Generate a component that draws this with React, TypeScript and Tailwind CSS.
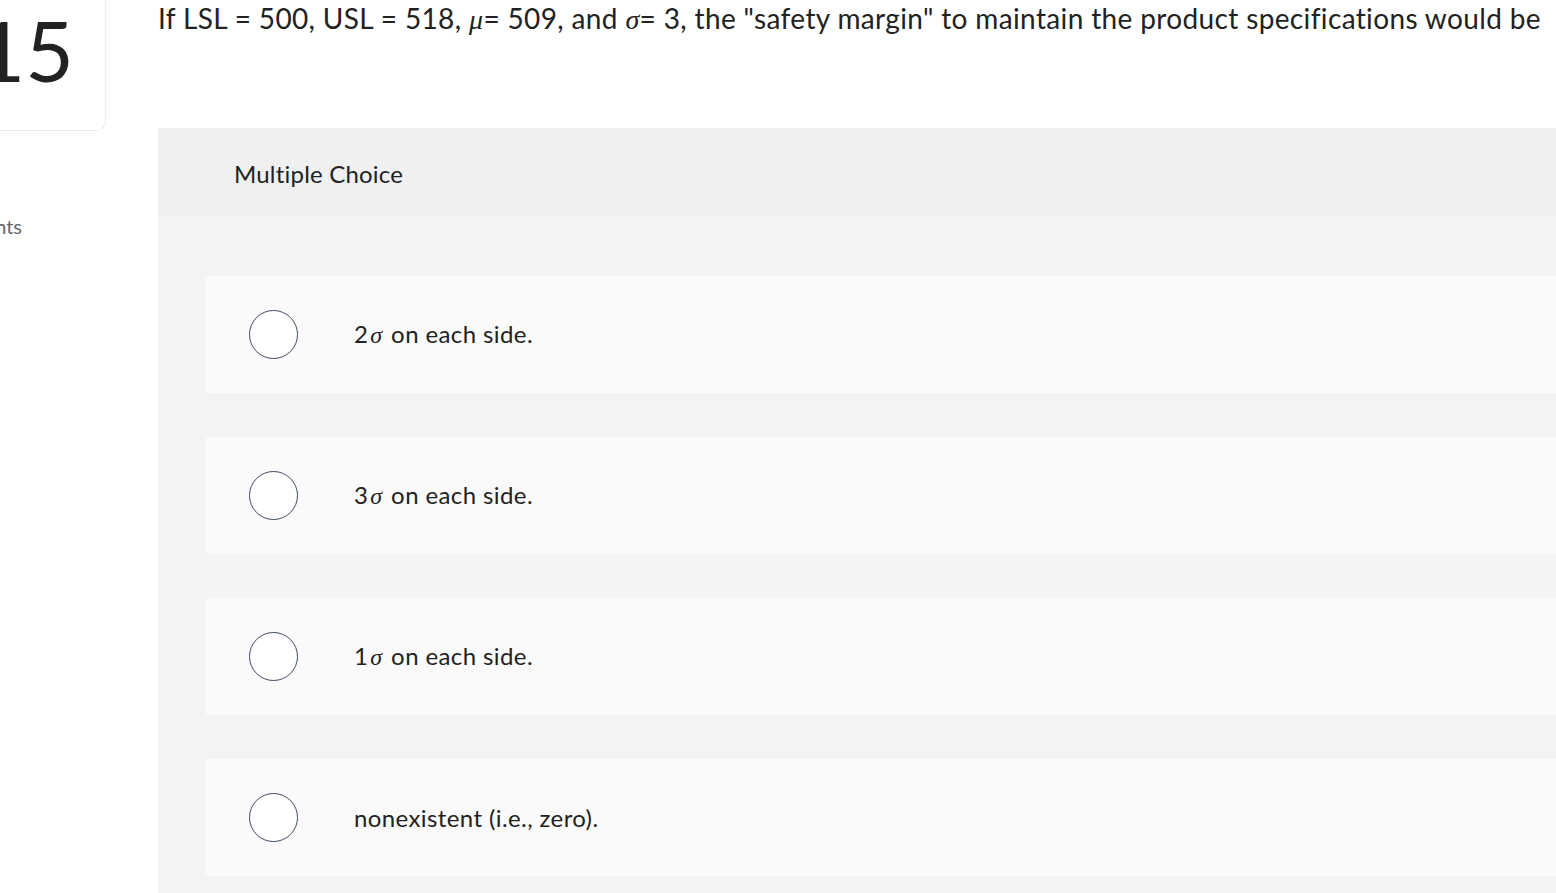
import React from "react";

const options: { pre: string; sigma: boolean; post: string }[] = [
  { pre: "2", sigma: true, post: " on each side." },
  { pre: "3", sigma: true, post: " on each side." },
  { pre: "1", sigma: true, post: " on each side." },
  { pre: "nonexistent (i.e., zero).", sigma: false, post: "" },
];

export default function App() {
  return (
    <div className="w-[1556px] h-[893px] bg-white overflow-hidden flex text-[#222222]" style={{ fontFamily: "Lato, 'Open Sans', sans-serif" }}>
      <div className="w-[158px] shrink-0 flex flex-col">
        <div className="w-[106px] h-[131px] border-r border-b border-[#ececec] rounded-br-[10px] flex justify-end pr-[31px] pt-[4px] overflow-visible">
          <span className="text-[84px] leading-[92px] whitespace-nowrap text-[#222222]">15</span>
        </div>
        <div className="w-[22px] mt-[81px] flex justify-end">
          <span className="text-[20px] leading-[28px] whitespace-nowrap text-[#666666]">1 points</span>
        </div>
      </div>
      <div className="flex-1 flex flex-col min-w-0">
        <div className="h-[128px] whitespace-nowrap text-[28px] leading-[36px] tracking-[0.36px]">
          If LSL = 500, USL = 518, <i className="font-serif">μ</i>= 509, and <i className="font-serif">σ</i>= 3, the "safety margin" to maintain the product specifications would be
        </div>
        <div className="flex-1 flex flex-col">
          <div className="h-[89px] bg-[#f0f0f0] pl-[76px] flex items-center">
            <span className="text-[24px] tracking-[0.2px] pt-[2px]">Multiple Choice</span>
          </div>
          <div className="flex-1 bg-[#f4f4f4] pl-[47px] pt-[59px] flex flex-col gap-[44px]">
            {options.map((o, i) => (
              <div key={i} className="h-[117px] shrink-0 bg-[#fafafa] rounded-l-[4px] flex items-center pl-[44px]">
                <div className="w-[49px] h-[49px] rounded-full border-[1.5px] border-[#3e4a5c] bg-white shrink-0" />
                <div className="ml-[56px] text-[24px] tracking-[0.4px] whitespace-nowrap">
                  {o.pre}
                  {o.sigma && <i className="font-serif mx-[2px]">σ</i>}
                  {o.post}
                </div>
              </div>
            ))}
          </div>
        </div>
      </div>
    </div>
  );
}
